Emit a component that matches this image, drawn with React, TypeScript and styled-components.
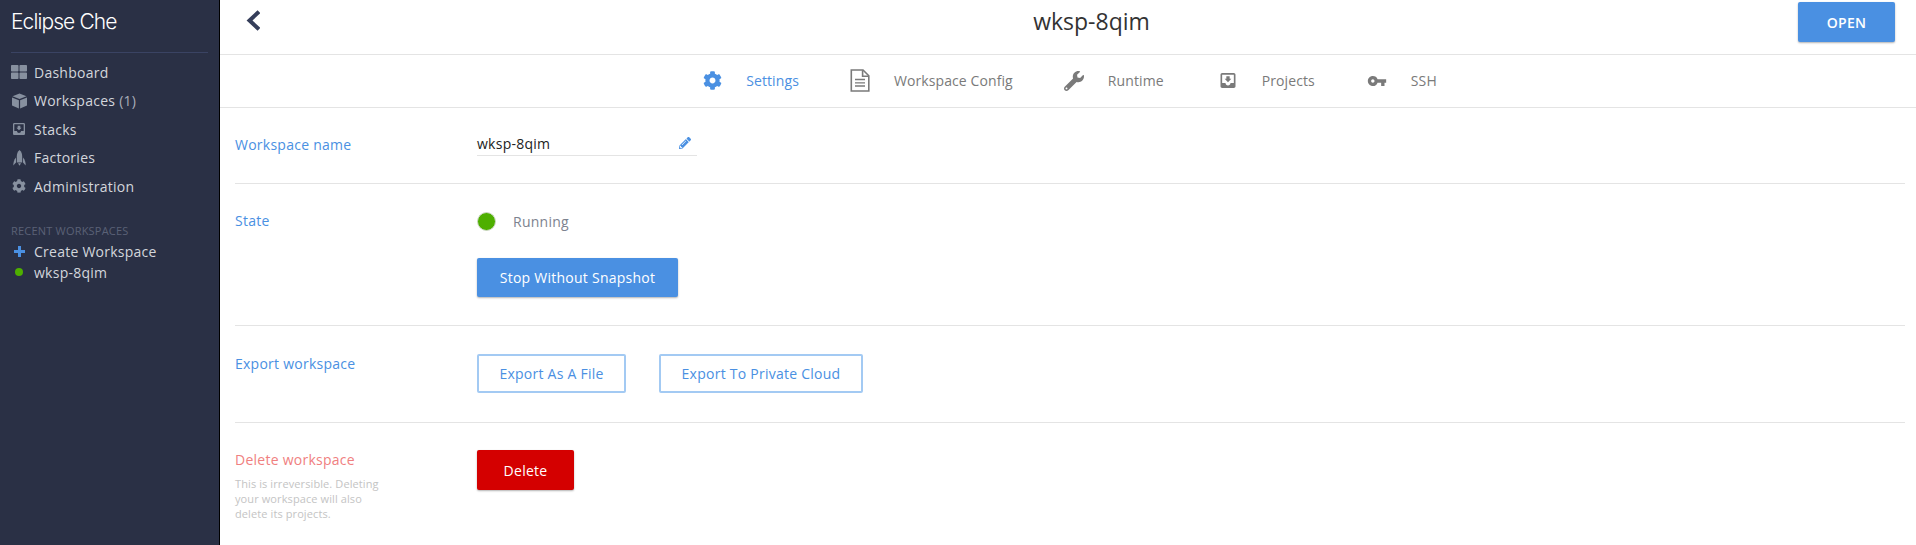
import React from "react";
import styled, { createGlobalStyle } from "styled-components";
import { FaCog, FaWrench, FaPencilAlt, FaThLarge } from "react-icons/fa";
import { MdMoveToInbox, MdVpnKey } from "react-icons/md";

const Global = createGlobalStyle`
  html, body { margin: 0; padding: 0; background: #fff; }
  * { box-sizing: border-box; }
  body { font-family: "Open Sans", "Liberation Sans", sans-serif; font-size: 14px; letter-spacing: 0.25px; }
`;

const Page = styled.div`
  display: flex;
  width: 1916px;
  height: 545px;
  overflow: hidden;
`;

const Sidebar = styled.aside`
  flex: 0 0 220px;
  background: #2a3045;
  border-right: 1px solid #000;
  padding: 0 11px;
  display: flex;
  flex-direction: column;
`;

const Logo = styled.div`
  height: 53px;
  padding-top: 9px;
  font-family: "Inter", "Liberation Sans", sans-serif;
  font-weight: 300;
  font-size: 21px;
  line-height: 26px;
  letter-spacing: -0.9px;
  color: #fff;
  border-bottom: 1px solid #3a4363;
`;

const NavList = styled.nav`
  display: flex;
  flex-direction: column;
  padding-top: 5px;
`;

const NavItem = styled.div<{ $h?: number }>`
  display: flex;
  align-items: center;
  height: ${(p) => p.$h ?? 28.5}px;
  color: #d3d6dc;
  font-size: 14px;
`;

const NavIcon = styled.span<{ $c?: string }>`
  flex: 0 0 23px;
  width: 23px;
  display: flex;
  justify-content: center;
  padding-right: 7px;
  color: ${(p) => p.$c ?? "#87909f"};
`;

const Count = styled.span`
  color: #a9aeb9;
  margin-left: 4px;
`;

const RecentTitle = styled.div`
  margin-top: 22px;
  font-size: 11px;
  line-height: 15px;
  letter-spacing: 0.2px;
  color: #5a6176;
  padding-bottom: 3px;
`;

const SmallDot = styled.span`
  display: block;
  width: 8px;
  height: 8px;
  border-radius: 50%;
  background: #4eaf00;
`;

const Main = styled.main`
  flex: 1;
  min-width: 0;
  display: flex;
  flex-direction: column;
`;

const Header = styled.header`
  height: 55px;
  flex: 0 0 55px;
  border-bottom: 1px solid #e4e4e4;
  display: flex;
  align-items: flex-start;
  padding: 2px 21px 0 26px;
`;

const Back = styled.span`
  width: 14px;
  height: 22px;
  margin-top: 8px;
  color: #353e5a;
  display: block;
  line-height: 0;
`;

const Title = styled.h1`
  flex: 1;
  margin: 0;
  padding-left: 125px;
  text-align: center;
  font-size: 23px;
  font-weight: 400;
  line-height: 38px;
  letter-spacing: 0;
  color: #333;
`;

const PrimaryButton = styled.button<{ $w: number; $h?: number; $weight?: number }>`
  width: ${(p) => p.$w}px;
  height: ${(p) => p.$h ?? 39}px;
  border: 0;
  border-radius: 2px;
  background: #4a90e2;
  color: #fff;
  font: ${(p) => p.$weight ?? 400} 14px "Open Sans", sans-serif;
  letter-spacing: 0.25px;
  box-shadow: 0 1px 2px rgba(0, 0, 0, 0.3);
  padding: 0;
`;

const DangerButton = styled(PrimaryButton)`
  background: #d40000;
`;

const OutlineButton = styled.button<{ $w: number }>`
  width: ${(p) => p.$w}px;
  height: 39px;
  border: 2px solid #a3caf3;
  border-radius: 2px;
  background: #fff;
  color: #4a90e2;
  font: 400 14px "Open Sans", sans-serif;
  letter-spacing: 0.25px;
  padding: 0;
`;

const Tabs = styled.div`
  flex: 0 0 53px;
  height: 53px;
  border-bottom: 1px solid #e4e4e4;
  display: flex;
  justify-content: center;
  align-items: center;
  padding-left: 3px;
  padding-bottom: 1px;
`;

const Tab = styled.div<{ $active?: boolean; $gap: number }>`
  display: flex;
  align-items: center;
  margin-right: ${(p) => p.$gap}px;
  color: ${(p) => (p.$active ? "#4a90e2" : "#7a7a7a")};
  font-size: 14px;
  letter-spacing: 0.1px;
`;

const TabIcon = styled.span`
  width: 20px;
  display: flex;
  justify-content: center;
  margin-right: 24px;
  line-height: 0;
`;

const Content = styled.div`
  padding: 0 11px 0 15px;
  display: flex;
  flex-direction: column;
`;

const Row = styled.section<{ $h: number; $last?: boolean }>`
  height: ${(p) => p.$h}px;
  display: grid;
  grid-template-columns: 242px 1fr;
  border-bottom: ${(p) => (p.$last ? "0" : "1px solid #e4e4e4")};
`;

const Label = styled.div<{ $top: number; $danger?: boolean }>`
  padding-top: ${(p) => p.$top}px;
  color: ${(p) => (p.$danger ? "#f08080" : "#4a90e2")};
  font-size: 14px;
  line-height: 20px;
`;

const Help = styled.p`
  margin: 6px 0 0;
  width: 160px;
  color: #c4c4c4;
  font-size: 11px;
  line-height: 15px;
  letter-spacing: 0.1px;
`;

const Cell = styled.div<{ $top: number }>`
  padding-top: ${(p) => p.$top}px;
`;

const NameField = styled.div`
  width: 220px;
  height: 26px;
  border-bottom: 1px solid #e4e4e4;
  display: flex;
  justify-content: space-between;
  align-items: center;
  padding: 2px 6px 0 0;
  color: #222;
  font-size: 14px;
`;

const PencilWrap = styled.span`
  color: #4a90e2;
  line-height: 0;
  margin-top: -2px;
`;

const StateLine = styled.div`
  display: flex;
  align-items: center;
  gap: 17px;
  color: #7d838f;
  font-size: 14px;
  height: 20px;
  margin-bottom: 27px;
`;

const StateDot = styled.span`
  width: 19px;
  height: 19px;
  border-radius: 50%;
  background: #4eaf00;
  border: 1px solid #cfd8c8;
`;

const ButtonRow = styled.div`
  display: flex;
  gap: 33px;
`;

const CubeIcon = () => (
  <svg width="15" height="16" viewBox="0 0 15 16" fill="currentColor">
    <path d="M7.5 0.5 14.5 3.2 7.5 6 0.5 3.2Z" />
    <path d="M0 4.4 6.9 7.2V15.6L0 12.6Z" />
    <path d="M15 4.4 8.1 7.2V15.6L15 12.6Z" />
  </svg>
);

const RocketIcon = () => (
  <svg width="13" height="16" viewBox="0 0 13 16" fill="currentColor">
    <path d="M6.5 0C8.3 1.6 9.2 3.8 9.2 6.4V12.5H3.8V6.4C3.8 3.8 4.7 1.6 6.5 0Z" />
    <path d="M3 7.6V12.5L0.3 15.6C0.3 12.6 1 9.6 3 7.6Z" />
    <path d="M10 7.6V12.5L12.7 15.6C12.7 12.6 12 9.6 10 7.6Z" />
    <path d="M5 13.2H8L6.5 15.8Z" />
  </svg>
);

const FileIcon = () => (
  <svg width="20" height="23" viewBox="0 0 20 23" fill="none" stroke="currentColor" strokeWidth="1.6">
    <path d="M1.3 1H13L18.8 6.8V22H1.3Z" />
    <path d="M12.6 1.2V7.2H18.6" />
    <path d="M5 10.5H15M5 13.8H15M5 17H15" strokeWidth="1.3" />
  </svg>
);

const ChevronIcon = () => (
  <svg width="14" height="21" viewBox="0 0 14 21" fill="none" stroke="currentColor" strokeWidth="4" strokeLinecap="square">
    <path d="M11.5 3 3.5 10.5 11.5 18" />
  </svg>
);

const PlusIcon = () => (
  <svg width="11" height="11" viewBox="0 0 11 11" fill="currentColor">
    <path d="M4 0H7V4H11V7H7V11H4V7H0V4H4Z" />
  </svg>
);

export default function App() {
  return (
    <>
      <Global />
      <Page>
        <Sidebar>
          <Logo>Eclipse Che</Logo>
          <NavList>
            <NavItem><NavIcon><FaThLarge size={16} /></NavIcon>Dashboard</NavItem>
            <NavItem><NavIcon><CubeIcon /></NavIcon>Workspaces<Count>(1)</Count></NavItem>
            <NavItem><NavIcon><MdMoveToInbox size={16} /></NavIcon>Stacks</NavItem>
            <NavItem><NavIcon><RocketIcon /></NavIcon>Factories</NavItem>
            <NavItem><NavIcon><FaCog size={14} /></NavIcon>Administration</NavItem>
          </NavList>
          <RecentTitle>RECENT WORKSPACES</RecentTitle>
          <NavItem $h={21}><NavIcon $c="#4a90e2"><PlusIcon /></NavIcon>Create Workspace</NavItem>
          <NavItem $h={21}><NavIcon><SmallDot /></NavIcon>wksp-8qim</NavItem>
        </Sidebar>
        <Main>
          <Header>
            <Back><ChevronIcon /></Back>
            <Title>wksp-8qim</Title>
            <PrimaryButton $w={97} $h={40} $weight={600}>OPEN</PrimaryButton>
          </Header>
          <Tabs>
            <Tab $active $gap={51}><TabIcon><FaCog size={19} /></TabIcon>Settings</Tab>
            <Tab $gap={51}><TabIcon><FileIcon /></TabIcon>Workspace Config</Tab>
            <Tab $gap={54}><TabIcon><FaWrench size={20} /></TabIcon>Runtime</Tab>
            <Tab $gap={52}><TabIcon><MdMoveToInbox size={23} /></TabIcon>Projects</Tab>
            <Tab $gap={0}><TabIcon><MdVpnKey size={22} /></TabIcon>SSH</Tab>
          </Tabs>
          <Content>
            <Row $h={76}>
              <Label $top={27}>Workspace name</Label>
              <Cell $top={22}>
                <NameField>wksp-8qim<PencilWrap><FaPencilAlt size={12} /></PencilWrap></NameField>
              </Cell>
            </Row>
            <Row $h={142}>
              <Label $top={27}>State</Label>
              <Cell $top={27}>
                <StateLine><StateDot />Running</StateLine>
                <PrimaryButton $w={201}>Stop Without Snapshot</PrimaryButton>
              </Cell>
            </Row>
            <Row $h={97}>
              <Label $top={28}>Export workspace</Label>
              <Cell $top={28}>
                <ButtonRow>
                  <OutlineButton $w={149}>Export As A File</OutlineButton>
                  <OutlineButton $w={204}>Export To Private Cloud</OutlineButton>
                </ButtonRow>
              </Cell>
            </Row>
            <Row $h={123} $last>
              <div>
                <Label $top={27} $danger>Delete workspace</Label>
                <Help>This is irreversible. Deleting your workspace will also delete its projects.</Help>
              </div>
              <Cell $top={27}>
                <DangerButton $w={97} $h={40}>Delete</DangerButton>
              </Cell>
            </Row>
          </Content>
        </Main>
      </Page>
    </>
  );
}
